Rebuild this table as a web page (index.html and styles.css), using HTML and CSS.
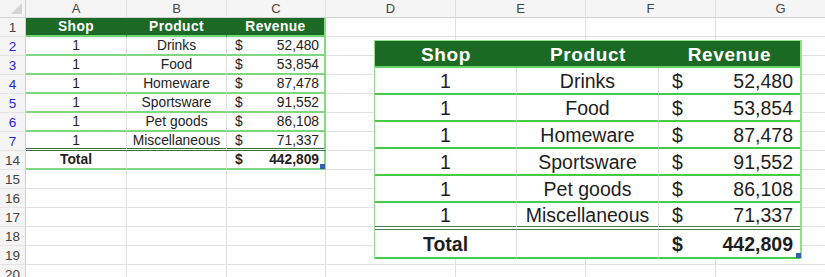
FILE: index.html
```html
<!DOCTYPE html>
<html>
<head>
<meta charset="utf-8">
<link rel="stylesheet" href="styles.css">
</head>
<body>
<div class="sheet">
  <div class="ch corner"></div>
  <div class="ch">A</div><div class="ch">B</div><div class="ch">C</div><div class="ch">D</div><div class="ch">E</div><div class="ch">F</div><div class="ch">G</div>

  <div class="rh">1</div>
  <div class="c g">Shop</div><div class="c g">Product</div><div class="c g gc">Revenue</div>
  <div class="c"></div><div class="c"></div><div class="c"></div><div class="c"></div>

  <div class="rh f">2</div>
  <div class="c t">1</div><div class="c t">Drinks</div><div class="c t cc m"><span>$</span><span>52,480</span></div>
  <div class="c"></div><div class="c"></div><div class="c"></div><div class="c"></div>

  <div class="rh f">3</div>
  <div class="c t">1</div><div class="c t">Food</div><div class="c t cc m"><span>$</span><span>53,854</span></div>
  <div class="c"></div><div class="c"></div><div class="c"></div><div class="c"></div>

  <div class="rh f">4</div>
  <div class="c t">1</div><div class="c t">Homeware</div><div class="c t cc m"><span>$</span><span>87,478</span></div>
  <div class="c"></div><div class="c"></div><div class="c"></div><div class="c"></div>

  <div class="rh f">5</div>
  <div class="c t">1</div><div class="c t">Sportsware</div><div class="c t cc m"><span>$</span><span>91,552</span></div>
  <div class="c"></div><div class="c"></div><div class="c"></div><div class="c"></div>

  <div class="rh f">6</div>
  <div class="c t">1</div><div class="c t">Pet goods</div><div class="c t cc m"><span>$</span><span>86,108</span></div>
  <div class="c"></div><div class="c"></div><div class="c"></div><div class="c"></div>

  <div class="rh f">7</div>
  <div class="c dbl">1</div><div class="c dbl">Miscellaneous</div><div class="c dbl cc m"><span>$</span><span>71,337</span></div>
  <div class="c"></div><div class="c"></div><div class="c"></div><div class="c"></div>

  <div class="rh">14</div>
  <div class="c t b">Total</div><div class="c t"></div><div class="c t cc m b sel"><span>$</span><span>442,809</span><i class="handle"></i></div>
  <div class="c"></div><div class="c"></div><div class="c"></div><div class="c"></div>

  <div class="rh">15</div>
  <div class="c"></div><div class="c"></div><div class="c"></div><div class="c"></div><div class="c"></div><div class="c"></div><div class="c"></div>
  <div class="rh">16</div>
  <div class="c"></div><div class="c"></div><div class="c"></div><div class="c"></div><div class="c"></div><div class="c"></div><div class="c"></div>
  <div class="rh">17</div>
  <div class="c"></div><div class="c"></div><div class="c"></div><div class="c"></div><div class="c"></div><div class="c"></div><div class="c"></div>
  <div class="rh">18</div>
  <div class="c"></div><div class="c"></div><div class="c"></div><div class="c"></div><div class="c"></div><div class="c"></div><div class="c"></div>
  <div class="rh">19</div>
  <div class="c"></div><div class="c"></div><div class="c"></div><div class="c"></div><div class="c"></div><div class="c"></div><div class="c"></div>
  <div class="rh">20</div>
  <div class="c"></div><div class="c"></div><div class="c"></div><div class="c"></div><div class="c"></div><div class="c"></div><div class="c"></div>

  <div class="pic">
    <div class="p ph">Shop</div><div class="p ph">Product</div><div class="p ph">Revenue</div>
    <div class="p">1</div><div class="p">Drinks</div><div class="p pm"><span>$</span><span>52,480</span></div>
    <div class="p">1</div><div class="p">Food</div><div class="p pm"><span>$</span><span>53,854</span></div>
    <div class="p">1</div><div class="p">Homeware</div><div class="p pm"><span>$</span><span>87,478</span></div>
    <div class="p">1</div><div class="p">Sportsware</div><div class="p pm"><span>$</span><span>91,552</span></div>
    <div class="p">1</div><div class="p">Pet goods</div><div class="p pm"><span>$</span><span>86,108</span></div>
    <div class="p pd">1</div><div class="p pd">Miscellaneous</div><div class="p pd pm"><span>$</span><span>71,337</span></div>
    <div class="p pt b">Total</div><div class="p pt"></div><div class="p pt pm b sel"><span>$</span><span>442,809</span><i class="handle"></i></div>
  </div>
</div>
</body>
</html>
```

FILE: styles.css
```css
html, body {
  margin: 0;
  padding: 0;
  background: #ffffff;
  overflow: hidden;
}

body {
  width: 825px;
  height: 277px;
  font-family: "Liberation Sans", Arial, sans-serif;
}

.sheet {
  position: relative;
  display: grid;
  grid-template-columns: 26px 101px 100px 99px 130px 130px 130px 130px;
  grid-template-rows: 18px repeat(14, 19px);
}

.ch {
  box-sizing: border-box;
  background: #f5f5f5;
  border-right: 1px solid #e0e0e0;
  border-bottom: 1px solid #d2d2d2;
  color: #444444;
  font-size: 13px;
  display: flex;
  align-items: center;
  justify-content: center;
}

.corner {
  align-items: flex-end;
  justify-content: flex-end;
  border-right: 1px solid #cfcfcf;
  padding: 0 3px 3px 0;
}

.corner::after {
  content: "";
  width: 0;
  height: 0;
  border-left: 11px solid transparent;
  border-bottom: 11px solid #d4d4d4;
}

.rh {
  box-sizing: border-box;
  background: #f5f5f5;
  border-right: 1px solid #cfcfcf;
  border-bottom: 1px solid #e4e4e4;
  color: #444444;
  font-size: 13.5px;
  display: flex;
  align-items: center;
  justify-content: center;
}

.rh.f {
  color: #1f1fdc;
}

.c {
  box-sizing: border-box;
  border-right: 1px solid #e1e1e1;
  border-bottom: 1px solid #e1e1e1;
  color: #222222;
  font-size: 13.8px;
  display: flex;
  align-items: center;
  justify-content: center;
  white-space: nowrap;
}

.g {
  background: #1c6a26;
  color: #ffffff;
  font-weight: bold;
  letter-spacing: 0.4px;
  border-right-color: #1c6a26;
  border-bottom: 2px solid #72d472;
}

.g.gc {
  border-right: 2px solid #86da86;
}

.t {
  border-bottom: 2px solid #7fd87f;
}

.dbl {
  border-bottom: 3px double #3b6e43;
}

.cc {
  border-right: 2px solid #86da86;
}

.m {
  justify-content: space-between;
  padding: 0 5px 0 8px;
}

.b {
  font-weight: bold;
}

.sel {
  position: relative;
}

.handle {
  position: absolute;
  right: -1px;
  bottom: -1px;
  width: 5px;
  height: 5px;
  background: #3560b0;
}

.pic {
  position: absolute;
  left: 374px;
  top: 40px;
  width: 428px;
  box-sizing: border-box;
  background: #ffffff;
  border-top: 1px solid #8fdf8f;
  border-left: 1px solid #8fdf8f;
  border-right: 2px solid #8fdf8f;
  display: grid;
  grid-template-columns: 142px 142px 1fr;
  grid-template-rows: 27px repeat(6, 27px) 29px;
}

.p {
  box-sizing: border-box;
  border-right: 1px solid #e0e0e0;
  border-bottom: 2px solid #44cc44;
  color: #1e1e1e;
  font-size: 19.5px;
  display: flex;
  align-items: center;
  justify-content: center;
  padding-top: 2px;
  white-space: nowrap;
}

.p:nth-child(3n) {
  border-right: none;
}

.ph {
  background: #1b6a24;
  color: #ffffff;
  font-weight: bold;
  font-size: 19px;
  letter-spacing: 0.6px;
  border-right: none;
  border-bottom: 2px solid #66d266;
}

.pm {
  justify-content: space-between;
  padding-left: 13px;
  padding-right: 7px;
}

.pd {
  border-bottom: 4px double #4a7a51;
}

.pt {
  border-bottom: 2px solid #44cc44;
}
```
